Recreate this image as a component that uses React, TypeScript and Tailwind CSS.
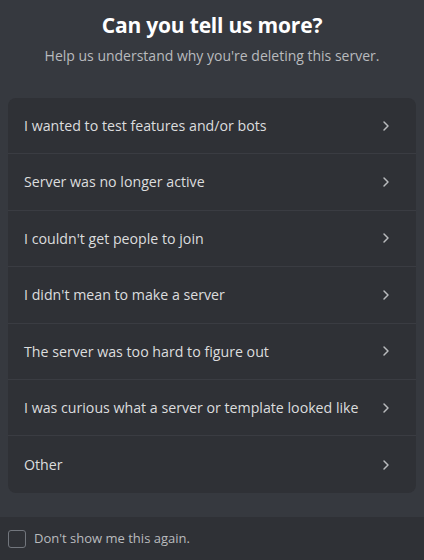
import { ChevronRight } from 'lucide-react';

const reasons = [
  'I wanted to test features and/or bots',
  'Server was no longer active',
  "I couldn't get people to join",
  "I didn't mean to make a server",
  'The server was too hard to figure out',
  'I was curious what a server or template looked like',
  'Other',
];

export default function App() {
  return (
    <div
      className="w-[424px] h-[560px] flex flex-col bg-[#36393f] overflow-hidden"
      style={{ fontFamily: '"Open Sans", "Noto Sans", sans-serif' }}
    >
      <div className="flex flex-col items-center pt-[10px]">
        <h1 className="text-[21px] leading-[30px] font-bold text-white tracking-[-0.2px]">Can you tell us more?</h1>
        <p className="mt-[6px] text-[14px] leading-[20px] text-[#b9bbbe]">
          Help us understand why you're deleting this server.
        </p>
      </div>

      <div className="mx-[8px] mt-[32px] rounded-[8px] bg-[#2f3136] flex flex-col">
        {reasons.map((r, i) => (
          <button
            key={r}
            className={`h-[56.4px] flex items-center justify-between pl-[16px] pr-[22px] text-left ${
              i < reasons.length - 1 ? 'border-b border-[#3a3c42]' : ''
            }`}
          >
            <span className="text-[14.2px] text-[#dcddde]">{r}</span>
            <ChevronRight className="w-[16px] h-[16px] text-[#b9bbbe]" strokeWidth={2.2} />
          </button>
        ))}
      </div>

      <div className="flex-1" />

      <div className="h-[43px] bg-[#2f3136] flex items-center pl-[8px] gap-[8px]">
        <div className="w-[18px] h-[18px] rounded-[3px] border-[1.5px] border-[#72767d]" />
        <span className="text-[13px] text-[#b9bbbe]">Don't show me this again.</span>
      </div>
    </div>
  );
}
